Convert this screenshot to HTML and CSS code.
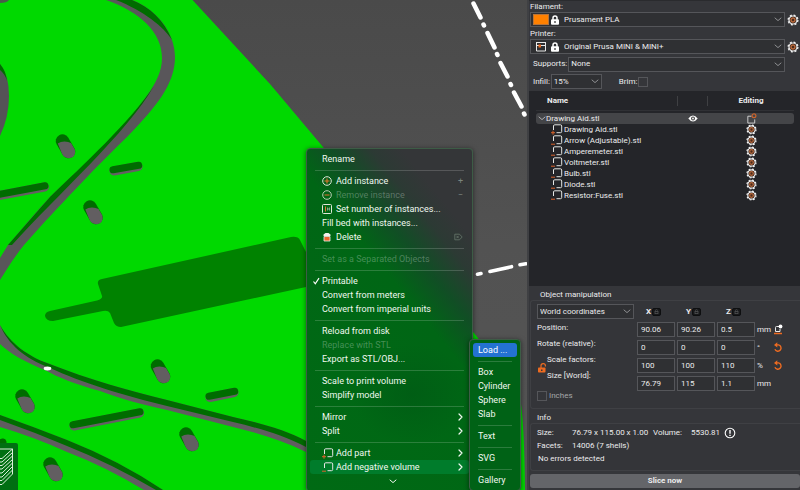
FILE: index.html
```html
<!DOCTYPE html>
<html lang="en">
<head>
<meta charset="utf-8">
<title>PrusaSlicer</title>
<link rel="stylesheet" href="styles.css">
</head>
<body>
<svg class="sprite" aria-hidden="true">
  <symbol id="gear" viewBox="0 0 12 12"><circle cx="6" cy="6" r="4" fill="#2a1c16" stroke="#f2f2f2" stroke-width="1.2"/><circle cx="6" cy="6" r="4.900" fill="none" stroke="#f2f2f2" stroke-width="1.300" stroke-dasharray="2 1.848"/><circle cx="6" cy="6" r="2" fill="#4a2c1c" stroke="#b8693c" stroke-width="1.4"/></symbol>
  <symbol id="chev" viewBox="0 0 8 5"><path d="M1 1l3 2.6L7 1" fill="none" stroke="currentColor" stroke-linecap="round"/></symbol>
  <symbol id="right" viewBox="0 0 5 8"><path d="M1 1l3 3-3 3" fill="none" stroke="currentColor" stroke-width="1.2" stroke-linecap="round" stroke-linejoin="round"/></symbol>
  <symbol id="lock" viewBox="0 0 8 10"><path d="M2 5V3a2 2 0 0 1 4 0v2" fill="none" stroke="#fff" stroke-width="1.5"/><rect y="4.2" width="8" height="5.6" rx="1" fill="#fff"/><rect x="3.4" y="6" width="1.2" height="2" fill="#333"/></symbol>
  <symbol id="part" viewBox="0 0 12 11"><path d="M2.5 6V2Q2.5 .8 3.700 .8H9.500Q10.700 .8 10.700 2V7.500Q10.700 8.700 9.500 8.700H5.500" fill="none" stroke="#e4e6e4" stroke-width="1"/></symbol>
  <symbol id="part-add" viewBox="0 0 12 11"><use href="#part"/><path d="M0 8.700h4M2 6.700v4" stroke="#d9622b" stroke-width="1"/></symbol>
  <symbol id="part-sub" viewBox="0 0 12 11"><use href="#part"/><path d="M0 9.200h4" stroke="#d9622b" stroke-width="1"/></symbol>
  <symbol id="undo" viewBox="0 0 10 11"><path d="M2.400 2.900H5.500a3.200 3.200 0 1 1-3.600 4.400" fill="none" stroke="#ed6b21" stroke-width="1.400"/><path d="M4.300 .3L1 2.900l3.300 2.600z" fill="#ed6b21"/></symbol>
  <symbol id="padlock" viewBox="0 0 9 8"><rect x=".5" y=".5" width="8" height="7" rx="1.500" fill="#17181a" stroke="#0e0f10"/><rect x="3" y="3.400" width="3" height="2.200" fill="none" stroke="#505153" stroke-width=".8"/><path d="M3.500 3.200V2.600a1 1 0 0 1 2 0" fill="none" stroke="#505153" stroke-width=".7"/></symbol>
</svg>

<div class="app">
  <main class="viewport">
    <svg class="scene" viewBox="0 0 527 490" preserveAspectRatio="xMinYMin slice" aria-hidden="true">
      <defs>
        <linearGradient id="bed" x1="0" y1="0" x2="0" y2="1"><stop offset="0" stop-color="#4a4a4a"/><stop offset=".5" stop-color="#525252"/><stop offset="1" stop-color="#555"/></linearGradient>
        <g id="slot"><path d="M0 0L6 10.500" stroke="#006c00" stroke-width="13.500" stroke-linecap="round"/><path d="M-4.700 2.500Q-2 .5 2 .5Q6 .5 8.500 2L12.300 8.500Q13.400 13 10.500 16Q6 18.500 1.500 15.500Q0 14-1 11.500z" fill="#625e61"/></g>
      </defs>
      <rect width="527" height="490" fill="url(#bed)"/>
      <path d="M0 0H192.500L270 84L323 147L420 264L474 333L517 388Q524 398 525 490H0z" fill="#00d900"/>
      <path d="M0 64Q9 75 9 96Q9 117 0 136z" fill="#555357"/><path d="M0 64Q6 71 7 81Q5 74 0 70z" fill="#006c00"/>
      <path d="M0 0H9Q7 3 0 3z" fill="#4a5a4a"/>
      <path d="M106 0C140 12 162 32 162 58C162 72 155 84 148 94C120 134 80 168 50 197C35 213 22 229 8 245L0 258V280C8 267 16 255 24 245C34 234 43 223 53 213C72 193 90 173 127 137C155 108 175 85 175 57C175 32 156 9 132 0z" fill="#59565a"/>
      <path d="M116 0C144 11 164 27 172 40C164 20 150 7 132 0zM154 86C130 122 82 166 50 197L8 245H12C56 196 128 132 154 86z" fill="#006c00"/>
      <path d="M0 325C10 344 30 357 47 363C90 380 130 391 167 400L233 417C260 423 286 430 306 441V452C282 440 258 433 233 427L167 410C140 404 118 398 100 391C75 384 57 377 47 371C24 362 8 352 0 344z" fill="#605c60"/>
      <path d="M0 325C10 344 30 357 47 363C90 380 130 391 167 400L233 417C260 423 286 430 306 441V447C280 434 258 428 233 422L167 406C125 396 80 382 50 368C24 358 8 344 0 325z" fill="#006c00"/>
      <path d="M0 415Q34 427 67 440Q120 461 163 490H144Q104 466 67 452Q34 437 0 427z" fill="#605c60"/>
      <path d="M0 415Q34 427 67 440Q120 461 163 490H156Q110 463 67 446Q34 432 0 420z" fill="#006c00"/>
      <ellipse cx="47.500" cy="368.500" rx="3.800" ry="1.900" fill="#fff"/>
      <path d="M45 316Q45 312 50 311L97 300.500Q103 299 102 296L98 284Q97 280 102 279L291 237Q298 236 300 240L306 252V287L121 327Q116 327 114 323L110 313Q108 310 103 311L53 321Q46 321 45 316z" fill="#008200"/>
      <use href="#slot" x="62.500" y="141"/><use href="#slot" x="90" y="207"/><use href="#slot" x="157.500" y="366"/><use href="#slot" x="22" y="396"/><use href="#slot" x="186" y="434"/><use href="#slot" x="50" y="464"/>
      <g fill="none" stroke="#655e64" stroke-width="9" stroke-linecap="round"><path d="M114 171L138 166.500M-3 196L44.500 187M210 397.500L234 392.500M74 426L139.500 413"/></g>
      <g fill="none" stroke="#006c00" stroke-width="7" stroke-linecap="round"><path d="M113 169.800L138.700 165.300M-3 194.800L45 185.800M209 396.300L234.700 391.300M73 424.800L140 411.800M-1 443L3 442"/></g>
      <g fill="none" stroke="#fff" stroke-width="4.500" stroke-linecap="round"><path d="M473.500 3.500L480.500 17.500M483.500 24.500L484 25.500M487.500 33L494.500 47.500M497 54L497.500 55M500.500 63L507.500 76.500M510.500 84L511 85M514 92.500L521.500 106.500M524 113.500L524.500 114.500"/></g>
      <g fill="none" stroke="#fff" stroke-width="3.600" stroke-linecap="round"><path d="M477.500 274.300L481 273.600M490 271.500L511.500 266.700M520 264.800L526 263.800"/></g>
      <path d="M0 443H16Q18 443 18 445V490H0z" fill="#006f12"/>
      <g fill="none" stroke="#dcefdc" stroke-width="1"><path d="M0 449H12.500L2 458.500H0M12.500 449V474L2 484.500H0M12.500 452.500L2 462H0M12.500 456L2 465.500H0M12.500 459.500L2 469H0M12.500 463L2 473H0M12.500 466.500L2 477H0M12.500 470L2 480.500H0"/></g>
    </svg>
    <button class="layers" type="button" aria-label="Layers"></button>
  </main>

  <aside class="sidebar">
    <section class="presets">
      <label class="cap" for="filament">Filament:</label>
      <div class="row">
        <div class="combo"><span class="swatch"></span><svg class="lock"><use href="#lock"/></svg>
          <select id="filament"><option>Prusament PLA</option></select><svg class="chev"><use href="#chev"/></svg></div>
        <button class="ico" type="button" aria-label="Edit filament"><svg><use href="#gear"/></svg></button>
      </div>
      <label class="cap" for="printer">Printer:</label>
      <div class="row">
        <div class="combo"><svg class="printer" viewBox="0 0 16 11"><path d="M3.500 1.500h9M3.500 1v9h9V1M3.500 4.500h9" fill="none" stroke="#e8e8e8"/><rect x="5.500" y="3.500" width="2.500" height="3" fill="#ed6b21"/></svg><svg class="lock"><use href="#lock"/></svg>
          <select id="printer"><option>Original Prusa MINI &amp; MINI+</option></select><svg class="chev"><use href="#chev"/></svg></div>
        <button class="ico" type="button" aria-label="Edit printer"><svg><use href="#gear"/></svg></button>
      </div>
      <div class="row opts supports">
        <label for="supports">Supports:</label>
        <div class="combo"><select id="supports"><option>None</option></select><svg class="chev"><use href="#chev"/></svg></div>
      </div>
      <div class="row opts">
        <label for="infill">Infill:</label>
        <div class="combo small"><select id="infill"><option>15%</option></select><svg class="chev"><use href="#chev"/></svg></div>
        <label class="brim" for="brim">Brim:</label><input id="brim" type="checkbox">
      </div>
    </section>

    <div class="objects">
      <table>
        <colgroup><col><col class="c-eye"><col class="c-edit"></colgroup>
        <thead><tr><th>Name</th><th class="eye" aria-label="Visible"></th><th>Editing</th></tr></thead>
        <tbody>
          <tr class="sel"><td><span class="name root"><svg class="twist"><use href="#chev"/></svg>Drawing Aid.stl</span></td>
            <td><svg class="eyeicon" viewBox="0 0 10 7"><path d="M.3 3.500Q5-2.500 9.700 3.500Q5 9.500.3 3.500z" fill="#fff"/><circle cx="5" cy="3.500" r="2" fill="#444"/><circle cx="5" cy="3.500" r=".9" fill="#fff"/></svg></td>
            <td><svg viewBox="0 0 12 12"><path d="M6 3.500H2v7.500h7.500V7" fill="none" stroke="#d8d8d8"/><circle cx="8.700" cy="3" r="2.100" fill="none" stroke="#c8632c" stroke-width="1.300"/></svg></td></tr>
          <tr><td><span class="name"><svg><use href="#part-add"/></svg>Drawing Aid.stl</span></td><td></td><td><svg><use href="#gear"/></svg></td></tr>
          <tr><td><span class="name"><svg><use href="#part-sub"/></svg>Arrow (Adjustable).stl</span></td><td></td><td><svg><use href="#gear"/></svg></td></tr>
          <tr><td><span class="name"><svg><use href="#part-sub"/></svg>Amperemeter.stl</span></td><td></td><td><svg><use href="#gear"/></svg></td></tr>
          <tr><td><span class="name"><svg><use href="#part-sub"/></svg>Voltmeter.stl</span></td><td></td><td><svg><use href="#gear"/></svg></td></tr>
          <tr><td><span class="name"><svg><use href="#part-sub"/></svg>Bulb.stl</span></td><td></td><td><svg><use href="#gear"/></svg></td></tr>
          <tr><td><span class="name"><svg><use href="#part-sub"/></svg>Diode.stl</span></td><td></td><td><svg><use href="#gear"/></svg></td></tr>
          <tr><td><span class="name"><svg><use href="#part-sub"/></svg>Resistor:Fuse.stl</span></td><td></td><td><svg><use href="#gear"/></svg></td></tr>
        </tbody>
      </table>
    </div>

    <h2 class="manip-title">Object manipulation</h2>
    <section class="group manip">
      <div class="cols">
        <div class="labels">
          <div class="combo"><select aria-label="Coordinate system"><option>World coordinates</option></select><svg class="chev"><use href="#chev"/></svg></div>
          <span class="lab">Position:</span>
          <span class="lab">Rotate (relative):</span>
          <div class="scale">
            <button class="ico" type="button" aria-label="Uniform scaling"><svg viewBox="0 0 10 10"><path d="M3 5V3a2.200 2.200 0 0 1 4.400-.3V3.500" transform="translate(1 0)" fill="none" stroke="#ed6b21" stroke-width="1.200"/><rect x="1" y="4.600" width="7.500" height="5" rx=".8" fill="#ed6b21"/><rect x="4" y="6.500" width="1.500" height="1.500" fill="#35363a"/></svg></button>
            <div><span class="lab">Scale factors:</span><span class="lab">Size [World]:</span></div>
          </div>
        </div>
        <div class="values">
          <b class="axis">X<svg><use href="#padlock"/></svg></b><b class="axis">Y<svg><use href="#padlock"/></svg></b><b class="axis">Z<svg><use href="#padlock"/></svg></b><span></span><span></span>
          <input aria-label="Position X" value="90.06"><input aria-label="Position Y" value="90.26"><input aria-label="Position Z" value="0.5"><span>mm</span><button class="ico" type="button" aria-label="Drop to bed"><svg viewBox="0 0 10 11"><path d="M6 2.500H3.500Q2.500 2.500 2.500 3.500V7.500H7V5" fill="none" stroke="#e8e8e8"/><circle cx="7.500" cy="2.500" r="1.900" fill="#fff"/><path d="M1 9.500h8" stroke="#ed6b21" stroke-width="1.500"/></svg></button>
          <input aria-label="Rotate X" value="0"><input aria-label="Rotate Y" value="0"><input aria-label="Rotate Z" value="0"><span>°</span><button class="ico" type="button" aria-label="Reset rotation"><svg><use href="#undo"/></svg></button>
          <input aria-label="Scale X" value="100"><input aria-label="Scale Y" value="100"><input aria-label="Scale Z" value="110"><span>%</span><button class="ico" type="button" aria-label="Reset scale"><svg><use href="#undo"/></svg></button>
          <input aria-label="Size X" value="76.79"><input aria-label="Size Y" value="115"><input aria-label="Size Z" value="1.1"><span>mm</span><span></span>
        </div>
      </div>
      <label class="inches"><input type="checkbox">Inches</label>
    </section>

    <h2>Info</h2>
    <section class="group info">
      <div><span class="k">Size:</span><span class="v">76.79 x 115.00 x 1.00</span><span class="vol">Volume:</span><span>5530.81</span><svg viewBox="0 0 12 12"><circle cx="6" cy="6" r="4.800" fill="none" stroke="#fff" stroke-width="1.100"/><path d="M6 3v3.800M6 7.800v1.200" stroke="#fff" stroke-width="1.400"/></svg></div>
      <div><span class="k">Facets:</span><span>14006 (7 shells)</span></div>
      <div class="err">No errors detected</div>
    </section>
    <button class="slice" type="button">Slice now</button>
  </aside>

  <div class="menu main-menu" role="menu">
    <button role="menuitem"><span>Rename</span></button>
    <hr>
    <button role="menuitem"><svg class="mi" viewBox="0 0 10 10"><circle cx="5" cy="5" r="4.300" fill="none" stroke="#dfe8d8"/><path d="M2.500 5h5M5 2.500v5" stroke="#e0772c" stroke-width="1.100"/></svg><span>Add instance</span><kbd>+</kbd></button>
    <button role="menuitem" disabled><svg class="mi" viewBox="0 0 10 10"><circle cx="5" cy="5" r="4.300" fill="none" stroke="#b9cdb4"/><path d="M2.500 5h5" stroke="#d0702c" stroke-width="1.100"/></svg><span>Remove instance</span><kbd>−</kbd></button>
    <button role="menuitem"><svg class="mi" viewBox="0 0 10 10"><rect x=".5" y=".5" width="9" height="9" rx="1" fill="none" stroke="#dfe8d8"/><path d="M3.500 2.500v5" stroke="#e0772c"/><path d="M5.500 3.500v3M7.500 3.500v3M5.500 5h2" stroke="#9fb59f" stroke-width=".8"/></svg><span>Set number of instances...</span></button>
    <button role="menuitem"><span>Fill bed with instances...</span></button>
    <button role="menuitem"><svg class="mi" viewBox="0 0 10 10"><path d="M1.500 4V2.500L3.500 1h3L8.500 2.500V4z" fill="#f2f2ea"/><path d="M2 4.500V9h6V4.500z" fill="#e8672a" stroke="#eee" stroke-width=".8"/></svg><span>Delete</span><svg class="del" viewBox="0 0 9 8"><path d="M.8 1.200H5.500L8.200 4L5.500 6.800H.8zM2.500 2.800l2.200 2.400M4.700 2.800L2.500 5.200" fill="none" stroke="#68786c" stroke-width=".8"/></svg></button>
    <hr>
    <button role="menuitem" disabled><span>Set as a Separated Objects</span></button>
    <hr>
    <button class="checked" role="menuitemcheckbox" aria-checked="true"><svg class="tick" viewBox="0 0 8 8"><path d="M1.500 4.500L3.300 6.800L7 1.200" fill="none" stroke="#fff" stroke-width="1.200"/></svg><span>Printable</span></button>
    <button role="menuitem"><span>Convert from meters</span></button>
    <button role="menuitem"><span>Convert from imperial units</span></button>
    <hr>
    <button role="menuitem"><span>Reload from disk</span></button>
    <button role="menuitem" disabled><span>Replace with STL</span></button>
    <button role="menuitem"><span>Export as STL/OBJ...</span></button>
    <hr>
    <button role="menuitem"><span>Scale to print volume</span></button>
    <button role="menuitem"><span>Simplify model</span></button>
    <hr>
    <button role="menuitem"><span>Mirror</span><svg class="arrow"><use href="#right"/></svg></button>
    <button role="menuitem"><span>Split</span><svg class="arrow"><use href="#right"/></svg></button>
    <hr>
    <button role="menuitem"><svg class="mi part"><use href="#part-add"/></svg><span>Add part</span><svg class="arrow"><use href="#right"/></svg></button>
    <button class="active" role="menuitem"><svg class="mi part"><use href="#part-sub"/></svg><span>Add negative volume</span><svg class="arrow"><use href="#right"/></svg></button>
    <button class="more" role="menuitem" aria-label="More"><svg><use href="#chev"/></svg></button>
  </div>

  <div class="menu sub-menu" role="menu">
    <button class="load" role="menuitem"><span>Load ...</span></button>
    <hr>
    <button role="menuitem"><span>Box</span></button>
    <button role="menuitem"><span>Cylinder</span></button>
    <button role="menuitem"><span>Sphere</span></button>
    <button role="menuitem"><span>Slab</span></button>
    <hr>
    <button role="menuitem"><span>Text</span></button>
    <hr>
    <button role="menuitem"><span>SVG</span></button>
    <hr>
    <button role="menuitem"><span>Gallery</span></button>
  </div>
</div>
</body>
</html>
```
FILE: styles.css
```css
* { box-sizing: border-box; }
body {
  margin: 0;
  font: 400 8px/10px Roboto, "Liberation Sans", sans-serif;
  color: #ececed;
  background: #35363a;
}
button, input, select { font: inherit; color: inherit; margin: 0; padding: 0; border: 0; background: none; border-radius: 0; }
svg { display: block; flex: none; }
.sprite { position: absolute; width: 0; height: 0; }
.app {
  position: relative;
  display: grid;
  grid-template-columns: minmax(0, 1fr) 273px;
  min-height: 100vh;
  overflow: hidden;
}

/* 3D view */
.viewport { position: relative; background: #525252; }
.scene { position: absolute; inset: 0; width: 100%; height: 100%; }
.layers { position: absolute; left: 0; bottom: 0; width: 18px; height: 47px; }

/* Sidebar */
.sidebar {
  position: relative;
  display: flex;
  flex-direction: column;
  background: #35363a;
  border-left: 2px solid #3f4043;
}
.presets { padding: 1px 1px 0; border-top: 1px solid #2a2b2e; }
.cap { display: block; height: 10px; }
.row { display: flex; align-items: center; height: 15px; margin-bottom: 2px; gap: 2px; }
.row .ico { width: 12px; height: 12px; }
.ico svg { width: 100%; height: 100%; }
.combo {
  display: flex;
  flex: 1;
  align-items: center;
  height: 15px;
  border: 1px solid #55565a;
  background: #2f3033;
  padding: 0 2px;
}
.combo select { flex: 1; min-width: 0; height: 13px; appearance: none; outline: 0; }
.chev { width: 8px; height: 5px; color: #8e8f92; }
.swatch { width: 16px; height: 11px; background: #ff8000; border: 1px solid #b8743a; margin-right: 2px; }
.printer { width: 16px; height: 11px; margin-right: 2px; }
.lock { width: 8px; height: 10px; margin-right: 5px; }
.opts { padding-left: 3px; gap: 1px; }
.supports { padding-right: 14px; margin-bottom: 3px; padding-top: 1px; }
.opts .combo.small { flex: none; width: 51px; }
.brim { margin-left: 16px; }
input[type="checkbox"] { appearance: none; width: 10px; height: 10px; border: 1px solid #55565a; }

/* Object list */
.objects { flex: 1; background: #242529; padding: 0 6px 0 7px; }
table { width: 100%; border-collapse: separate; border-spacing: 0; table-layout: fixed; }
.c-eye { width: 31px; }
.c-edit { width: 86px; }
th { height: 20px; padding: 0; font-weight: 700; border-bottom: 1px solid #303135; }
th:first-child { text-align: left; padding-left: 11px; }
.eye { background: linear-gradient(#3f4043, #3f4043) 0 50% / 1px 10px no-repeat, linear-gradient(#3f4043, #3f4043) 100% 50% / 1px 10px no-repeat; }
tbody::before { content: ""; display: block; height: 2px; }
td { height: 11px; padding: 0; line-height: 11px; }
td > svg { width: 11px; height: 11px; margin: 0 auto; }
td > .eyeicon { width: 10px; height: 7px; }
.sel td { background: #444548; }
.sel td:first-child { border-radius: 3px 0 0 3px; }
.sel td:last-child { border-radius: 0 3px 3px 0; }
.name { display: flex; align-items: center; gap: 1px; padding-left: 15px; }
.name svg { width: 12px; height: 11px; }
.name.root { padding-left: 2px; gap: 0; }
.name .twist { width: 8px; height: 5px; color: #b0b0b2; }

/* Manipulation and info */
h2 { margin: 0; padding: 4px 8px 0; font: inherit; }
h2.manip-title { padding-left: 11px; }
.group { border: 1px solid #3f4044; border-right: 0; border-radius: 3px 0 0 3px; margin-left: 1px; background: #343539; }
.manip { padding: 3px 6px 7px; }
.cols { display: flex; gap: 3px; }
.labels { width: 97px; margin-bottom: 3px; }
.labels .combo { margin-bottom: 1px; flex: none; }
.lab { display: block; line-height: 16px; }
.scale { display: flex; align-items: center; }
.scale .ico { width: 10px; height: 10px; }
.values {
  display: grid;
  grid-template-columns: repeat(3, 38px) 14px 10px;
  grid-auto-rows: 15px;
  gap: 3px 2px;
  align-items: center;
}
.values > input { width: 100%; height: 15px; border: 1px solid #55565a; background: #2f3033; padding: 0 3px; }
.values .ico { width: 10px; height: 11px; }
.axis { display: flex; align-items: center; gap: 1px; padding-left: 9px; }
.axis svg { width: 9px; height: 8px; }
.inches { display: flex; align-items: center; gap: 2px; color: #a6a7a9; }
.info { padding: 2px 6px 5px; }
.info div { display: flex; align-items: center; height: 13px; }
.info .k { width: 35px; }
.info .v { width: 81px; }
.info .vol { width: 38px; }
.info svg { width: 12px; height: 12px; margin-left: 4px; }
.info .err { padding-left: 1px; }
.slice { height: 14px; margin: 3px 0 2px 1px; background: #646569; border-radius: 3px; font-weight: 700; }

/* Context menus */
.menu {
  position: absolute;
  padding: 3px;
  border: 1px solid #3d5c46;
  border-radius: 4px;
  font-size: 9px;
  color: #f0f8f0;
  box-shadow: 0 1px 5px #0008;
}
.menu button { display: flex; align-items: center; width: 100%; height: 14px; padding: 0 6px 0 12px; text-align: left; border-radius: 3px; }
.menu span { flex: 1; white-space: nowrap; }
.menu hr { height: 1px; margin: 4px 5px 3px; border: 0; background: #ffffff2b; }
.menu button:disabled { color: #ffffff48; }
.main-menu {
  left: 306px;
  top: 148px;
  width: 167px;
  background:
    radial-gradient(60px 50px at 105px 245px, #00501466, transparent),
    linear-gradient(51deg, #006a14 0%, #006615 58%, #114e25 68%, #2c3a34 77%, #343638 84%);
}
.menu .mi { width: 10px; height: 10px; margin-right: 4px; }
.menu .mi.part { width: 12px; height: 11px; margin-right: 2px; }
.menu .checked { padding-left: 2px; }
.tick { width: 8px; height: 8px; margin-right: 2px; }
.menu kbd { font: inherit; color: #7b857e; }
.del { width: 9px; height: 8px; }
.arrow { width: 5px; height: 8px; }
.menu .active { background: #007c2b; }
.menu .more { justify-content: center; }
.more svg { width: 8px; height: 5px; }
.sub-menu { left: 469px; top: 339px; width: 52px; background: #006216; }
.sub-menu button { padding: 0 0 0 5px; }
.menu .load { background: #2472d2; color: #fff; }
```
